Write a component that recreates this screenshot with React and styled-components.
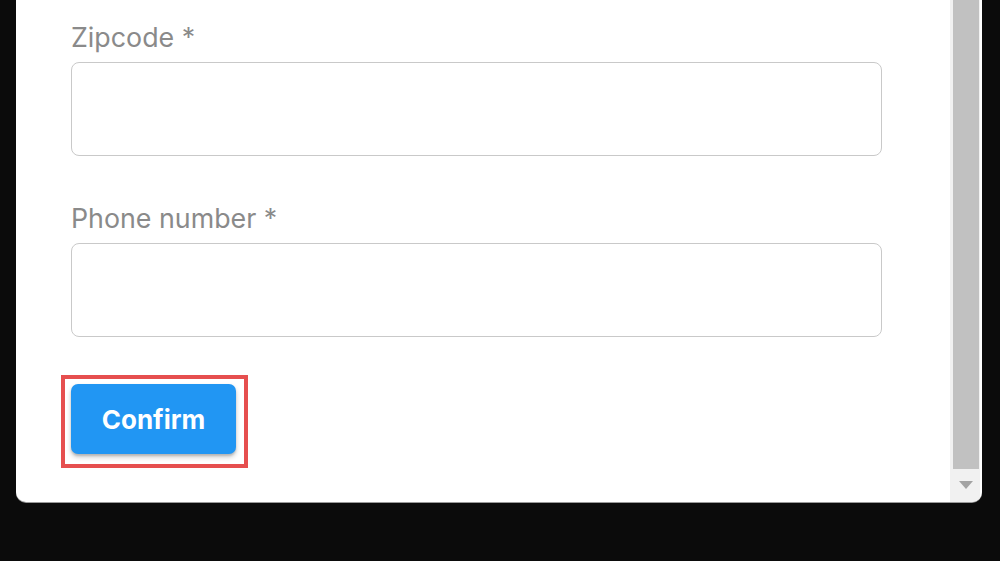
import React from 'react';
import styled, { createGlobalStyle } from 'styled-components';

const GlobalStyle = createGlobalStyle`
  html, body {
    margin: 0;
    padding: 0;
    background: #0b0b0b;
  }
`;

const Page = styled.div`
  height: 561px;
  box-sizing: border-box;
  overflow: hidden;
  display: flex;
  flex-direction: column;
  justify-content: flex-end;
  padding: 0 18px 59px 16px;
  background: #0b0b0b;
  font-family: Inter, "Liberation Sans", sans-serif;
`;

const Panel = styled.div`
  flex-shrink: 0;
  display: flex;
  background: #ffffff;
  border-radius: 10px;
  overflow: hidden;
  padding-right: 2px;
  box-shadow: 0 1px 0 #9a9a9a;
`;

const Form = styled.form`
  flex: 1;
  display: flex;
  flex-direction: column;
  gap: 47px;
  padding: 70px 68px 34px 55px;
`;

const Field = styled.div`
  display: flex;
  flex-direction: column;
`;

const Label = styled.label`
  font-size: 26.8px;
  line-height: 31px;
  font-weight: 400;
  color: #8a8a8a;
  margin-bottom: 9px;
`;

const Input = styled.input`
  box-sizing: border-box;
  height: 94px;
  width: 100%;
  border: 1px solid #c9c9c9;
  border-radius: 8px;
  background: #fff;
  font: 400 26px Inter, "Liberation Sans", sans-serif;
  padding: 0 16px;
  outline: none;
`;

const Highlight = styled.div`
  align-self: flex-start;
  margin: -9px 0 0 -10px;
  border: 4px solid #e64f4f;
  padding: 5px 8px 10px 6px;
`;

const Button = styled.button`
  display: block;
  width: 165px;
  height: 70px;
  border: none;
  border-radius: 7px;
  background: #2196f3;
  color: #ffffff;
  font: 700 26px Inter, "Liberation Sans", sans-serif;
  cursor: pointer;
  box-shadow: 0 3px 5px rgba(0, 0, 0, 0.22), 0 2px 2px rgba(0, 0, 0, 0.12);
`;

const Scrollbar = styled.div`
  width: 30px;
  display: flex;
  flex-direction: column;
  background: #f1f1f1;
`;

const Thumb = styled.div`
  flex: 1;
  margin: 0 1px 0 3px;
  background: #c1c1c1;
`;

const ArrowButton = styled.div`
  height: 33px;
  display: flex;
  justify-content: center;
  padding-top: 12px;
  box-sizing: border-box;
`;

const Arrow = styled.span`
  width: 0;
  height: 0;
  margin-left: 2px;
  border-left: 7.5px solid transparent;
  border-right: 7.5px solid transparent;
  border-top: 8px solid #a3a3a3;
`;

const fields = ['Zipcode *', 'Phone number *'];

export default function App() {
  return (
    <>
      <GlobalStyle />
      <Page>
        <Panel>
          <Form onSubmit={(e) => e.preventDefault()}>
            {fields.map((name) => (
              <Field key={name}>
                <Label>{name}</Label>
                <Input type="text" />
              </Field>
            ))}
            <Highlight>
              <Button type="submit">Confirm</Button>
            </Highlight>
          </Form>
          <Scrollbar>
            <Thumb />
            <ArrowButton>
              <Arrow />
            </ArrowButton>
          </Scrollbar>
        </Panel>
      </Page>
    </>
  );
}
